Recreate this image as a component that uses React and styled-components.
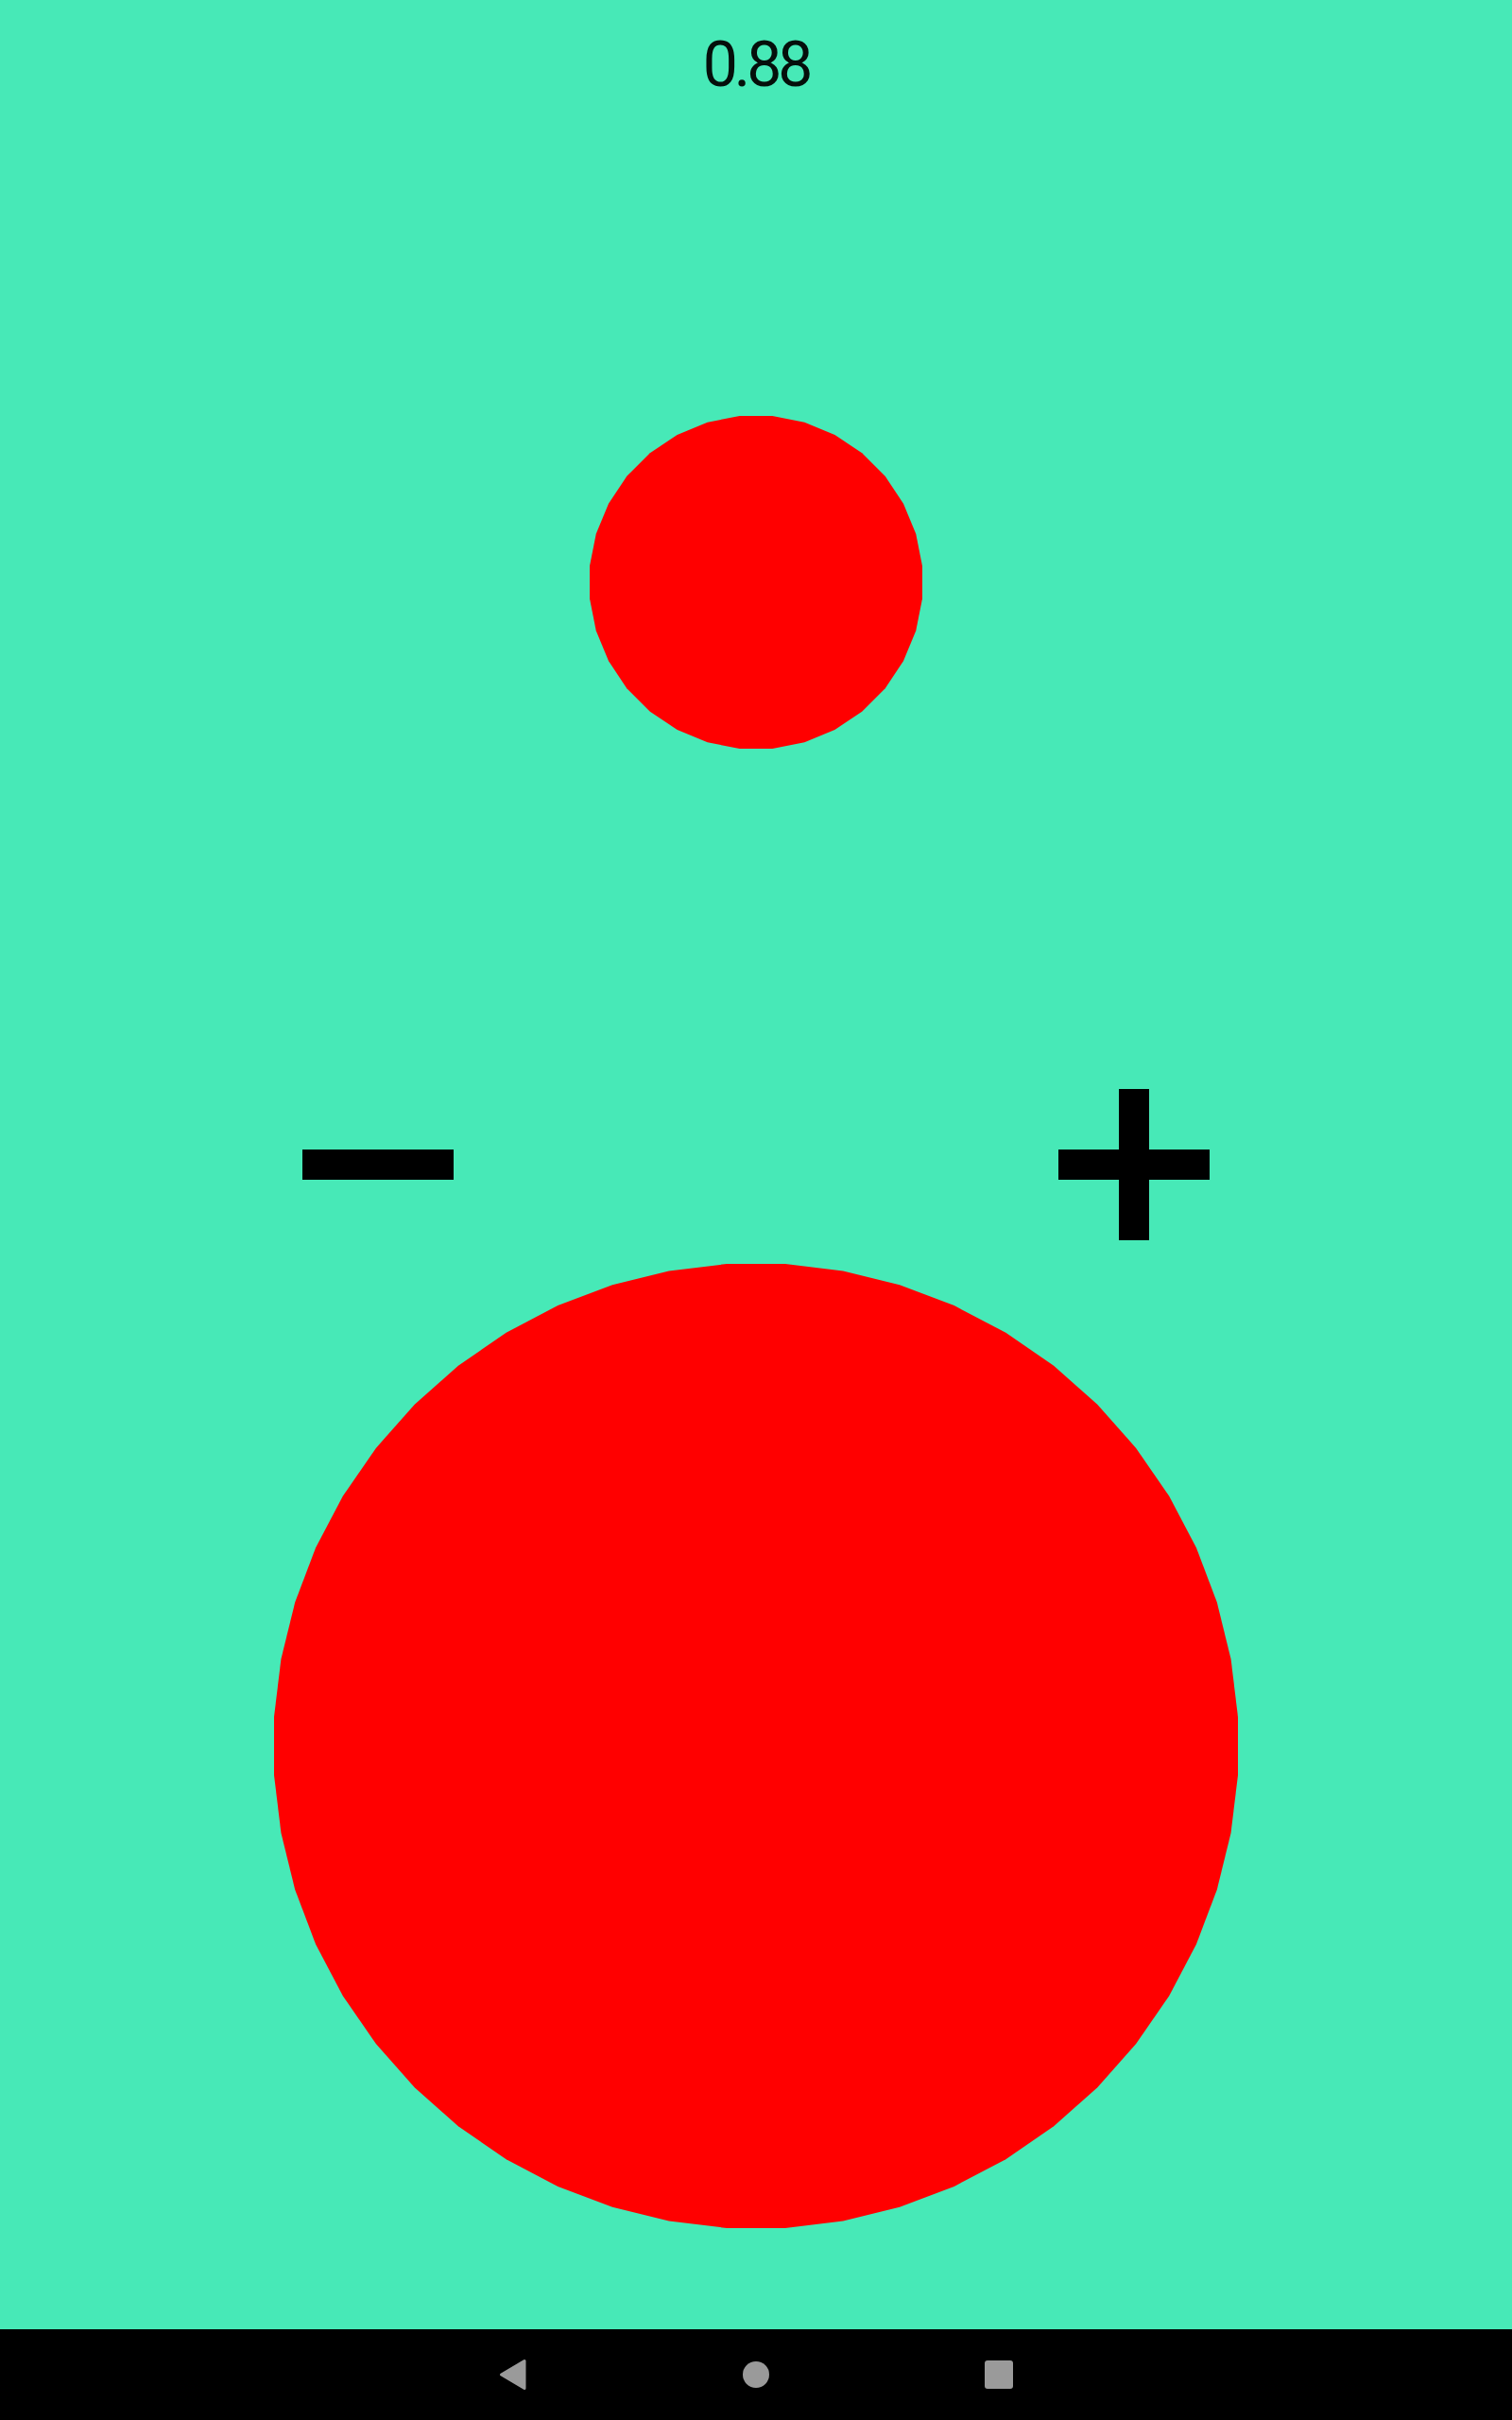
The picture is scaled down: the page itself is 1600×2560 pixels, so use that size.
import React from "react"
import styled, { createGlobalStyle } from "styled-components"

const GlobalStyle = createGlobalStyle`
  html, body {
    margin: 0;
    padding: 0;
    background: #000;
  }
  body {
    font-family: Roboto, "Liberation Sans", sans-serif;
  }
`

// regular n-gon, flat edges on the axes, fitted flat-to-flat in a size x size box
const polygonPoints = (size, sides) => {
  const half = size / 2
  const r = half / Math.cos(Math.PI / sides)
  const pts = []
  for (let i = 0; i < sides; i++) {
    const a = ((i + 0.5) * 2 * Math.PI) / sides
    pts.push(`${(half + r * Math.cos(a)).toFixed(2)},${(half + r * Math.sin(a)).toFixed(2)}`)
  }
  return pts.join(" ")
}

const Ball = ({ size, sides, className }) => (
  <svg className={className} width={size} height={size} viewBox={`0 0 ${size} ${size}`}>
    <polygon points={polygonPoints(size, sides)} fill="#ff0000" />
  </svg>
)

const MinusIcon = () => (
  <svg width="160" height="160" viewBox="0 0 160 160">
    <rect x="0" y="64" width="160" height="32" fill="#000" />
  </svg>
)

const PlusIcon = () => (
  <svg width="160" height="160" viewBox="0 0 160 160">
    <rect x="0" y="64" width="160" height="32" fill="#000" />
    <rect x="64" y="0" width="32" height="160" fill="#000" />
  </svg>
)

const BackIcon = () => (
  <svg width="30" height="34" viewBox="0 0 30 34">
    <path
      d="M2.5 17 L27 2.5 L27 31.5 Z"
      fill="#9a9a9a"
      stroke="#9a9a9a"
      strokeWidth="3"
      strokeLinejoin="round"
    />
  </svg>
)

const HomeIcon = () => (
  <svg width="28" height="28" viewBox="0 0 28 28">
    <circle cx="14" cy="14" r="14" fill="#9a9a9a" />
  </svg>
)

const RecentsIcon = () => (
  <svg width="30" height="30" viewBox="0 0 30 30">
    <rect x="0" y="0" width="30" height="30" rx="3" fill="#9a9a9a" />
  </svg>
)

const App = () => (
  <Page>
    <GlobalStyle />
    <Screen>
      <Value>0.88</Value>
      <SmallBall size={352} sides={32} />
      <Controls>
        <ControlButton type="button" aria-label="Decrease">
          <MinusIcon />
        </ControlButton>
        <ControlButton type="button" aria-label="Increase">
          <PlusIcon />
        </ControlButton>
      </Controls>
      <BigBall size={1020} sides={52} />
    </Screen>
    <NavBar>
      <NavSlot>
        <BackIcon />
      </NavSlot>
      <NavSlot>
        <HomeIcon />
      </NavSlot>
      <NavSlot>
        <RecentsIcon />
      </NavSlot>
    </NavBar>
  </Page>
)

export default App

const Page = styled.div`
  width: 1600px;
  height: 2560px;
  display: flex;
  flex-direction: column;
  overflow: hidden;
`

const Screen = styled.main`
  height: 2464px;
  flex-shrink: 0;
  background: #47e9b7;
  display: flex;
  flex-direction: column;
  align-items: center;
`

const Value = styled.div`
  padding-top: 36px;
  font-size: 66px;
  line-height: 66px;
  letter-spacing: -4px;
  color: #050f0b;
`

const SmallBall = styled(Ball)`
  display: block;
  flex-shrink: 0;
  margin-top: 338px;
`

const Controls = styled.div`
  align-self: stretch;
  display: flex;
  justify-content: space-between;
  padding: 0 320px;
  margin-top: 360px;
`

const ControlButton = styled.button`
  width: 160px;
  height: 160px;
  padding: 0;
  border: none;
  background: none;
  cursor: pointer;
  svg {
    display: block;
  }
`

const BigBall = styled(Ball)`
  display: block;
  flex-shrink: 0;
  margin-top: 25px;
`

const NavBar = styled.nav`
  height: 96px;
  flex-shrink: 0;
  background: #000;
  display: flex;
  justify-content: center;
  align-items: center;
  gap: 161px;
`

const NavSlot = styled.div`
  width: 96px;
  display: flex;
  justify-content: center;
  align-items: center;
  svg {
    display: block;
  }
`
